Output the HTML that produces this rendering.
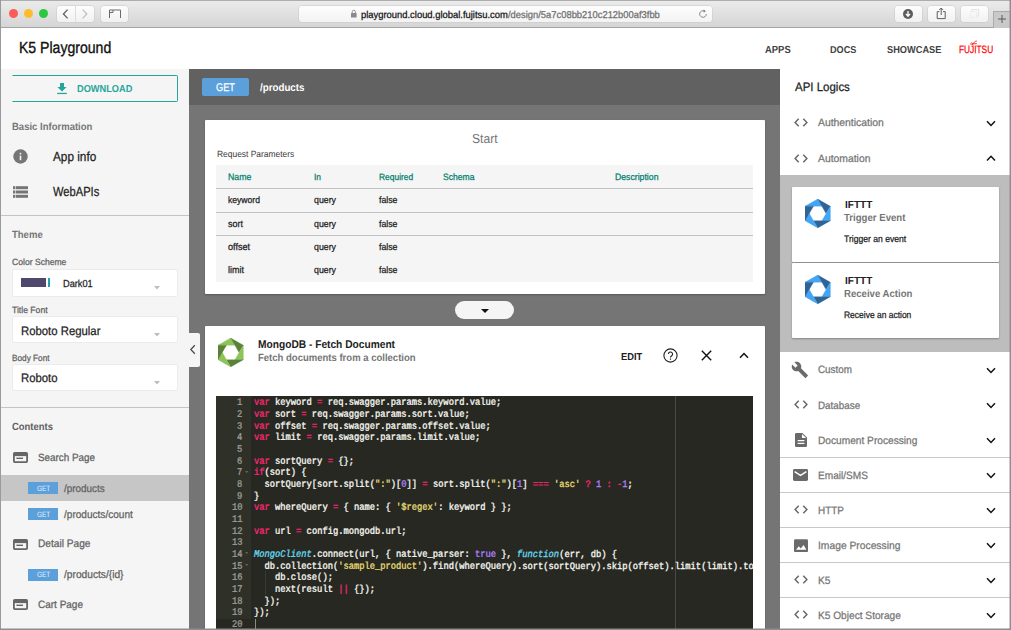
<!DOCTYPE html>
<html><head><meta charset="utf-8"><title>K5 Playground</title>
<style>
html,body{margin:0;padding:0;}
body{width:1011px;height:630px;overflow:hidden;position:relative;background:#fff;font-family:"Liberation Sans",sans-serif;}
.b{position:absolute;display:block;box-sizing:border-box;}
.t{position:absolute;display:block;white-space:nowrap;line-height:1;transform-origin:0 0;-webkit-text-stroke:0.25px;}
.c{position:absolute;display:block;white-space:pre;line-height:1;transform-origin:0 0;-webkit-text-stroke:0.3px;font-family:"Liberation Mono",monospace;}
.k{color:#f92672}.s{color:#e6db74}.n{color:#ae81ff}.f{color:#66d9ef;font-style:italic}
</style></head><body>
<div class="b" style="left:0px;top:0px;width:1011px;height:28px;background:linear-gradient(#ebebeb,#d5d5d5);border-top:1px solid #adadad;border-bottom:1px solid #a3a3a3;"></div>
<div class="b" style="left:0px;top:28px;width:1011px;height:41px;background:#fff;"></div>
<div class="b" style="left:0px;top:69px;width:189px;height:561px;background:#f5f5f5;"></div>
<div class="b" style="left:189px;top:69px;width:591px;height:561px;background:#757575;"></div>
<div class="b" style="left:189px;top:69px;width:591px;height:36px;background:#616161;"></div>
<div class="b" style="left:780px;top:69px;width:231px;height:561px;background:#fff;"></div>
<div class="b" style="left:8.8px;top:9.1px;width:9.4px;height:9.4px;background:#fc5b57;border-radius:50%;"></div>
<div class="b" style="left:23.7px;top:9.1px;width:9.4px;height:9.4px;background:#fdbc2e;border-radius:50%;"></div>
<div class="b" style="left:38.5px;top:9.1px;width:9.4px;height:9.4px;background:#28c83f;border-radius:50%;"></div>
<div class="b" style="left:57px;top:6px;width:37px;height:16px;background:linear-gradient(#fdfdfd,#f1f1f1);border-radius:3px;box-shadow:0 0 0 0.5px #c9c9c9;"></div>
<div class="b" style="left:75.3px;top:6px;width:1px;height:16px;background:#dcdcdc;"></div>
<svg class="b" style="left:57px;top:6px;" width="37" height="16" viewBox="0 0 37 16"><path d="M10.6 3.6 L6.4 8 L10.6 12.4" fill="none" stroke="#5a5a5a" stroke-width="1.2"/><path d="M25.6 3.6 L29.8 8 L25.6 12.4" fill="none" stroke="#bcbcbc" stroke-width="1.2"/></svg>
<div class="b" style="left:101px;top:6px;width:27px;height:16px;background:linear-gradient(#fdfdfd,#f1f1f1);border-radius:3px;box-shadow:0 0 0 0.5px #c9c9c9;"></div>
<svg class="b" style="left:101px;top:6px;" width="27" height="16" viewBox="0 0 27 16"><path d="M8.5 12 V4 H19.5 V12 M8.5 6.5 H12 V4" fill="none" stroke="#6a6a6a" stroke-width="1"/></svg>
<div class="b" style="left:298.5px;top:6px;width:413px;height:16px;background:linear-gradient(#fdfdfd,#f3f3f3);border-radius:3px;box-shadow:0 0 0 0.5px #c9c9c9;"></div>
<svg class="b" style="left:350px;top:9px;" width="8" height="10" viewBox="0 0 8 10"><rect x="1" y="4" width="5.6" height="4.6" rx="0.6" fill="#8a8a8a"/><path d="M2.2 4.2 V2.8 a1.6 1.6 0 0 1 3.2 0 V4.2" fill="none" stroke="#8a8a8a" stroke-width="0.9"/></svg>
<span class="t" style="left:360.70px;top:10.010px;font-size:9.90px;color:#111;transform:scale(0.9518,1) rotate(0.03deg);">playground.cloud.global.fujitsu.com</span>
<span class="t" style="left:507.90px;top:10.010px;font-size:9.90px;color:#6e6e6e;transform:scale(0.9501,1) rotate(0.03deg);">/design/5a7c08bb210c212b00af3fbb</span>
<svg class="b" style="left:698px;top:9px;" width="10" height="10" viewBox="0 0 10 10"><path d="M8.3 5 A3.3 3.3 0 1 1 6.6 2.1" fill="none" stroke="#7a7a7a" stroke-width="0.9"/><path d="M5.6 0.6 L7.8 2.2 L5.6 3.8 Z" fill="#7a7a7a"/></svg>
<div class="b" style="left:895px;top:6px;width:26.5px;height:16px;background:linear-gradient(#fdfdfd,#f1f1f1);border-radius:3px;box-shadow:0 0 0 0.5px #c9c9c9;"></div>
<div class="b" style="left:928px;top:6px;width:26.5px;height:16px;background:linear-gradient(#fdfdfd,#f1f1f1);border-radius:3px;box-shadow:0 0 0 0.5px #c9c9c9;"></div>
<div class="b" style="left:961px;top:6px;width:26.5px;height:16px;background:linear-gradient(#fdfdfd,#f1f1f1);border-radius:3px;box-shadow:0 0 0 0.5px #c9c9c9;"></div>
<svg class="b" style="left:903px;top:8.7px;" width="10" height="10" viewBox="0 0 10 10"><circle cx="5" cy="5" r="5" fill="#5c5c5c"/><path d="M5 2 V6.4 M2.9 4.9 L5 7.2 L7.1 4.9" stroke="#fff" stroke-width="1.3" fill="none"/></svg>
<svg class="b" style="left:936px;top:7px;" width="11" height="13" viewBox="0 0 11 13"><path d="M3.4 4.6 H1.2 V11.6 H9.2 V4.6 H7" fill="none" stroke="#5f5f5f" stroke-width="1"/><path d="M5.2 8 V1.2 M3.2 3 L5.2 1 L7.2 3" fill="none" stroke="#5f5f5f" stroke-width="1"/></svg>
<svg class="b" style="left:969px;top:8px;" width="11" height="11" viewBox="0 0 11 11"><path d="M3 3.5 V1.5 H9.5 V8 H8" fill="none" stroke="#e3e3e3" stroke-width="1"/><rect x="1.5" y="3.5" width="6" height="6" fill="none" stroke="#ededed" stroke-width="1"/></svg>
<div class="b" style="left:993px;top:10.5px;width:17px;height:17px;background:#c9c9c9;border-left:1px solid #ababab;border-top:1px solid #ababab;"></div>
<svg class="b" style="left:997px;top:14px;" width="10" height="10" viewBox="0 0 10 10"><path d="M5 1 V9 M1 5 H9" stroke="#5a5a5a" stroke-width="1"/></svg>
<span class="t" style="left:18.80px;top:39.012px;font-size:16.10px;color:#111;transform:scale(0.8739,1) rotate(0.03deg);-webkit-text-stroke:0.35px #111;">K5 Playground</span>
<span class="t" style="left:765.20px;top:45.011px;font-size:10.29px;color:#424242;font-weight:bold;-webkit-text-stroke:0;transform:scale(0.9174,1) rotate(0.03deg);">APPS</span>
<span class="t" style="left:829.50px;top:45.007px;font-size:9.92px;color:#424242;font-weight:bold;-webkit-text-stroke:0;transform:scale(0.9174,1) rotate(0.03deg);">DOCS</span>
<span class="t" style="left:886.60px;top:45.008px;font-size:10.07px;color:#424242;font-weight:bold;-webkit-text-stroke:0;transform:scale(0.9174,1) rotate(0.03deg);">SHOWCASE</span>
<span class="t" style="left:959.20px;top:44.011px;font-size:10.60px;color:#ff0000;transform:scale(0.7848,1) rotate(0.03deg);">FUJITSU</span>
<svg class="b" style="left:969.8px;top:39.6px;" width="7.4" height="5.6" viewBox="0 0 7.4 5.6"><path d="M3.2 3.9 L1.8 5 L0.5 3.9 L1.8 2.8 L3.2 3.9 C4 2.6 4.6 1 6.9 1 M3.2 3.9 C4.2 3.6 5.4 3.7 6.9 3.7" fill="none" stroke="#ff0000" stroke-width="0.8"/></svg>
<div class="b" style="left:12px;top:75px;width:166px;height:27px;background:transparent;border:1px solid #26a69a;border-left-color:transparent;border-radius:0 2px 2px 0;"></div>
<svg class="b" style="left:56.4px;top:82px;" width="12" height="13" viewBox="0 0 12 13"><path d="M4 1 H8 V5 H10.6 L6 9.6 L1.4 5 H4 Z" fill="#26a69a"/><rect x="1.2" y="10.8" width="9.6" height="1.3" fill="#26a69a"/></svg>
<span class="t" style="left:77.00px;top:84.010px;font-size:10.07px;color:#26a69a;font-weight:bold;-webkit-text-stroke:0;transform:scale(0.9174,1) rotate(0.03deg);">DOWNLOAD</span>
<span class="t" style="left:12.00px;top:122.003px;font-size:10.39px;color:#757575;font-weight:bold;-webkit-text-stroke:0;transform:scale(0.9174,1) rotate(0.03deg);">Basic Information</span>
<svg class="b" style="left:13px;top:149.3px;" width="15" height="15" viewBox="0 0 15 15"><circle cx="7.5" cy="7.5" r="7.2" fill="#757575"/><rect x="6.7" y="6.6" width="1.6" height="4.6" fill="#f5f5f5"/><rect x="6.7" y="3.8" width="1.6" height="1.6" fill="#f5f5f5"/></svg>
<span class="t" style="left:52.80px;top:150.014px;font-size:13.20px;color:#212121;transform:scale(0.8939,1) rotate(0.03deg);">App info</span>
<svg class="b" style="left:13px;top:186px;" width="15" height="12" viewBox="0 0 15 12"><g fill="#757575"><rect x="0" y="0.2" width="2.4" height="3"/><rect x="3.0" y="0.2" width="12" height="3"/><rect x="0" y="4.5" width="2.4" height="3"/><rect x="3.0" y="4.5" width="12" height="3"/><rect x="0" y="8.8" width="2.4" height="3"/><rect x="3.0" y="8.8" width="12" height="3"/></g></svg>
<span class="t" style="left:53.00px;top:185.014px;font-size:13.20px;color:#212121;transform:scale(0.8452,1) rotate(0.03deg);">WebAPIs</span>
<div class="b" style="left:0px;top:214.5px;width:189px;height:1px;background:#c4c4c4;"></div>
<span class="t" style="left:12.00px;top:230.009px;font-size:10.38px;color:#757575;font-weight:bold;-webkit-text-stroke:0;transform:scale(0.9174,1) rotate(0.03deg);">Theme</span>
<span class="t" style="left:12.00px;top:258.007px;font-size:9.00px;color:#616161;transform:scale(0.9540,1) rotate(0.03deg);">Color Scheme</span>
<div class="b" style="left:12px;top:269px;width:166px;height:28px;background:#fff;border:1px solid #ebebeb;border-radius:2px;"></div>
<div class="b" style="left:12px;top:316px;width:166px;height:27px;background:#fff;border:1px solid #ebebeb;border-radius:2px;"></div>
<div class="b" style="left:12px;top:364px;width:166px;height:27px;background:#fff;border:1px solid #ebebeb;border-radius:2px;"></div>
<div class="b" style="left:21px;top:278px;width:25px;height:9px;background:#50486c;"></div>
<div class="b" style="left:48px;top:278px;width:2px;height:9px;background:#22a1b5;"></div>
<span class="t" style="left:62.90px;top:279.006px;font-size:10.20px;color:#212121;transform:scale(0.9063,1) rotate(0.03deg);">Dark01</span>
<svg class="b" style="left:153.8px;top:285.7px;" width="6" height="4" viewBox="0 0 6 4"><path d="M0 0 H6 L3 3.4 Z" fill="#bdbdbd"/></svg>
<svg class="b" style="left:153.8px;top:333px;" width="6" height="4" viewBox="0 0 6 4"><path d="M0 0 H6 L3 3.4 Z" fill="#bdbdbd"/></svg>
<svg class="b" style="left:153.8px;top:381px;" width="6" height="4" viewBox="0 0 6 4"><path d="M0 0 H6 L3 3.4 Z" fill="#bdbdbd"/></svg>
<span class="t" style="left:12.00px;top:306.007px;font-size:9.00px;color:#616161;transform:scale(0.9575,1) rotate(0.03deg);">Title Font</span>
<span class="t" style="left:21.40px;top:325.001px;font-size:12.20px;color:#212121;transform:scale(0.9303,1) rotate(0.03deg);">Roboto Regular</span>
<span class="t" style="left:12.00px;top:354.007px;font-size:9.00px;color:#616161;transform:scale(0.9141,1) rotate(0.03deg);">Body Font</span>
<span class="t" style="left:21.40px;top:372.001px;font-size:12.20px;color:#212121;transform:scale(0.9303,1) rotate(0.03deg);">Roboto</span>
<div class="b" style="left:0px;top:407px;width:189px;height:1px;background:#c4c4c4;"></div>
<span class="t" style="left:12.00px;top:422.004px;font-size:10.31px;color:#616161;font-weight:bold;-webkit-text-stroke:0;transform:scale(0.9174,1) rotate(0.03deg);">Contents</span>
<div class="b" style="left:0px;top:475px;width:189px;height:26px;background:#c6c6c6;"></div>
<svg class="b" style="left:13px;top:452px;" width="15" height="11" viewBox="0 0 15 11"><rect x="0.9" y="0.9" width="13.2" height="9.2" rx="0.8" fill="none" stroke="#666" stroke-width="1.8"/><rect x="0.9" y="0.9" width="13.2" height="3.2" fill="#666"/><rect x="3.4" y="5.6" width="6.6" height="1.4" fill="#666"/></svg>
<span class="t" style="left:38.00px;top:452.008px;font-size:10.55px;color:#616161;transform:scale(0.9346,1) rotate(0.03deg);">Search Page</span>
<div class="b" style="left:28px;top:482px;width:30px;height:12px;background:#5b9fdb;"></div>
<span class="t" style="left:36.60px;top:485.004px;font-size:7.60px;color:rgba(255,255,255,.88);transform:scale(0.8513,1) rotate(0.03deg);-webkit-text-stroke:0;">GET</span>
<span class="t" style="left:64.30px;top:483.000px;font-size:10.61px;color:#616161;transform:scale(0.9346,1) rotate(0.03deg);">/products</span>
<div class="b" style="left:28px;top:508px;width:30px;height:12px;background:#5b9fdb;"></div>
<span class="t" style="left:36.60px;top:511.004px;font-size:7.60px;color:rgba(255,255,255,.88);transform:scale(0.8513,1) rotate(0.03deg);-webkit-text-stroke:0;">GET</span>
<span class="t" style="left:64.30px;top:509.011px;font-size:10.77px;color:#616161;transform:scale(0.9346,1) rotate(0.03deg);">/products/count</span>
<svg class="b" style="left:13px;top:538.5px;" width="15" height="11" viewBox="0 0 15 11"><rect x="0.9" y="0.9" width="13.2" height="9.2" rx="0.8" fill="none" stroke="#666" stroke-width="1.8"/><rect x="0.9" y="0.9" width="13.2" height="3.2" fill="#666"/><rect x="3.4" y="5.6" width="6.6" height="1.4" fill="#666"/></svg>
<span class="t" style="left:38.00px;top:538.006px;font-size:10.87px;color:#616161;transform:scale(0.9346,1) rotate(0.03deg);">Detail Page</span>
<div class="b" style="left:28px;top:568.5px;width:30px;height:12px;background:#5b9fdb;"></div>
<span class="t" style="left:36.60px;top:571.004px;font-size:7.60px;color:rgba(255,255,255,.88);transform:scale(0.8513,1) rotate(0.03deg);-webkit-text-stroke:0;">GET</span>
<span class="t" style="left:64.30px;top:569.002px;font-size:10.91px;color:#616161;transform:scale(0.9346,1) rotate(0.03deg);">/products/{id}</span>
<svg class="b" style="left:13px;top:599px;" width="15" height="11" viewBox="0 0 15 11"><rect x="0.9" y="0.9" width="13.2" height="9.2" rx="0.8" fill="none" stroke="#666" stroke-width="1.8"/><rect x="0.9" y="0.9" width="13.2" height="3.2" fill="#666"/><rect x="3.4" y="5.6" width="6.6" height="1.4" fill="#666"/></svg>
<span class="t" style="left:38.00px;top:599.010px;font-size:10.69px;color:#616161;transform:scale(0.9346,1) rotate(0.03deg);">Cart Page</span>
<div class="b" style="left:189px;top:332.5px;width:11px;height:34px;background:#f5f5f5;border-radius:0 2px 2px 0;"></div>
<svg class="b" style="left:189.2px;top:344px;" width="8" height="11" viewBox="0 0 8 11"><path d="M5.8 1.2 L1.8 5.5 L5.8 9.8" fill="none" stroke="#4a4a4a" stroke-width="1.25"/></svg>
<div class="b" style="left:202px;top:78px;width:47px;height:18px;background:#5b9fdb;border-radius:2px;"></div>
<span class="t" style="left:215.60px;top:82.004px;font-size:11.20px;color:#fff;transform:scale(0.8252,1) rotate(0.03deg);">GET</span>
<span class="t" style="left:259.80px;top:82.003px;font-size:10.65px;color:#fff;font-weight:bold;-webkit-text-stroke:0;transform:scale(0.9174,1) rotate(0.03deg);">/products</span>
<div class="b" style="left:205px;top:120px;width:560px;height:174px;background:#fff;border-radius:1px;box-shadow:0 1px 2px rgba(0,0,0,.25);"></div>
<span class="t" style="left:471.60px;top:133.005px;font-size:12.97px;color:#757575;transform:scale(0.9346,1) rotate(0.03deg);-webkit-text-stroke:0;">Start</span>
<span class="t" style="left:216.70px;top:150.012px;font-size:9.03px;color:#3a3a3a;transform:scale(0.9346,1) rotate(0.03deg);-webkit-text-stroke:0;">Request Parameters</span>
<div class="b" style="left:216px;top:164.5px;width:537px;height:117px;background:#f5f5f5;"></div>
<span class="t" style="left:228.30px;top:173.011px;font-size:9.35px;color:#00806f;transform:scale(0.9346,1) rotate(0.03deg);">Name</span>
<span class="t" style="left:313.80px;top:173.007px;font-size:8.98px;color:#00806f;transform:scale(0.9346,1) rotate(0.03deg);">In</span>
<span class="t" style="left:378.50px;top:173.008px;font-size:9.02px;color:#00806f;transform:scale(0.9346,1) rotate(0.03deg);">Required</span>
<span class="t" style="left:442.60px;top:173.004px;font-size:9.19px;color:#00806f;transform:scale(0.9346,1) rotate(0.03deg);">Schema</span>
<span class="t" style="left:614.70px;top:173.014px;font-size:9.31px;color:#00806f;transform:scale(0.9346,1) rotate(0.03deg);">Description</span>
<div class="b" style="left:216px;top:188px;width:537px;height:1px;background:#c2c2c2;"></div>
<div class="b" style="left:216px;top:212px;width:537px;height:1px;background:#c2c2c2;"></div>
<div class="b" style="left:216px;top:235px;width:537px;height:1px;background:#c2c2c2;"></div>
<span class="t" style="left:228.30px;top:196.013px;font-size:9.20px;color:#212121;transform:scale(0.9346,1) rotate(0.03deg);">keyword</span>
<span class="t" style="left:313.80px;top:195.003px;font-size:9.41px;color:#212121;transform:scale(0.9346,1) rotate(0.03deg);">query</span>
<span class="t" style="left:378.50px;top:196.005px;font-size:9.37px;color:#212121;transform:scale(0.9346,1) rotate(0.03deg);">false</span>
<span class="t" style="left:228.30px;top:219.006px;font-size:9.63px;color:#212121;transform:scale(0.9346,1) rotate(0.03deg);">sort</span>
<span class="t" style="left:313.80px;top:219.003px;font-size:9.41px;color:#212121;transform:scale(0.9346,1) rotate(0.03deg);">query</span>
<span class="t" style="left:378.50px;top:220.005px;font-size:9.37px;color:#212121;transform:scale(0.9346,1) rotate(0.03deg);">false</span>
<span class="t" style="left:228.30px;top:242.011px;font-size:9.70px;color:#212121;transform:scale(0.9346,1) rotate(0.03deg);">offset</span>
<span class="t" style="left:313.80px;top:242.003px;font-size:9.41px;color:#212121;transform:scale(0.9346,1) rotate(0.03deg);">query</span>
<span class="t" style="left:378.50px;top:243.005px;font-size:9.37px;color:#212121;transform:scale(0.9346,1) rotate(0.03deg);">false</span>
<span class="t" style="left:228.30px;top:265.003px;font-size:9.63px;color:#212121;transform:scale(0.9346,1) rotate(0.03deg);">limit</span>
<span class="t" style="left:313.80px;top:265.003px;font-size:9.41px;color:#212121;transform:scale(0.9346,1) rotate(0.03deg);">query</span>
<span class="t" style="left:378.50px;top:266.005px;font-size:9.37px;color:#212121;transform:scale(0.9346,1) rotate(0.03deg);">false</span>
<div class="b" style="left:455px;top:301px;width:59px;height:18px;background:#f5f5f5;border-radius:9px;"></div>
<svg class="b" style="left:480.5px;top:308.6px;" width="8" height="4" viewBox="0 0 8 4"><path d="M0 0 H8 L4 4 Z" fill="#111"/></svg>
<div class="b" style="left:205px;top:326px;width:560px;height:320px;background:#fff;border-radius:1px;box-shadow:0 1px 2px rgba(0,0,0,.25);"></div>
<svg class="b" style="left:218.2px;top:337.9px;" width="25.4" height="28.9" viewBox="0 0 25.4 28.9"><polygon points="0.00,7.22 12.70,0.00 16.87,7.22" fill="#8dc55a" stroke="#8dc55a" stroke-width="0.3"/><polygon points="12.70,0.00 25.40,7.22 21.04,14.45" fill="#5b8238" stroke="#5b8238" stroke-width="0.3"/><polygon points="25.40,7.22 25.40,21.67 16.87,21.67" fill="#8dc55a" stroke="#8dc55a" stroke-width="0.3"/><polygon points="25.40,21.67 12.70,28.90 8.53,21.67" fill="#5b8238" stroke="#5b8238" stroke-width="0.3"/><polygon points="12.70,28.90 0.00,21.67 4.36,14.45" fill="#8dc55a" stroke="#8dc55a" stroke-width="0.3"/><polygon points="0.00,21.67 0.00,7.22 8.53,7.22" fill="#5b8238" stroke="#5b8238" stroke-width="0.3"/></svg>
<span class="t" style="left:257.90px;top:339.004px;font-size:11.11px;color:#212121;font-weight:bold;-webkit-text-stroke:0;transform:scale(0.9174,1) rotate(0.03deg);">MongoDB - Fetch Document</span>
<span class="t" style="left:258.00px;top:353.014px;font-size:10.39px;color:#757575;font-weight:bold;-webkit-text-stroke:0;transform:scale(0.9174,1) rotate(0.03deg);">Fetch documents from a collection</span>
<span class="t" style="left:620.50px;top:352.006px;font-size:10.14px;color:#212121;font-weight:bold;-webkit-text-stroke:0;transform:scale(0.9174,1) rotate(0.03deg);">EDIT</span>
<svg class="b" style="left:663.2px;top:348.1px;" width="15" height="15" viewBox="0 0 15 15"><circle cx="7.5" cy="7.5" r="6.6" fill="none" stroke="#212121" stroke-width="1.1"/><path d="M5.4 6.1 a2.1 2.1 0 1 1 3.3 1.7 c-0.8 0.6 -1.2 0.9 -1.2 1.8" fill="none" stroke="#212121" stroke-width="1.1"/><rect x="6.9" y="10.5" width="1.2" height="1.2" fill="#212121"/></svg>
<svg class="b" style="left:700.6px;top:350.3px;" width="11" height="11" viewBox="0 0 11 11"><path d="M0.8 0.8 L10.2 10.2 M10.2 0.8 L0.8 10.2" stroke="#111" stroke-width="1.4"/></svg>
<svg class="b" style="left:739.3px;top:352px;" width="10" height="7" viewBox="0 0 10 7"><path d="M1 5.7 L5 1.6 L9 5.7" fill="none" stroke="#111" stroke-width="1.5"/></svg>
<div class="b" style="left:216px;top:396px;width:537px;height:234px;background:#272822;"></div>
<div class="b" style="left:216px;top:396px;width:35px;height:234px;background:#2f3129;"></div>
<div class="b" style="left:675.3px;top:396px;width:1px;height:234px;background:#4a4b45;"></div>
<div class="b" style="left:216px;top:619px;width:35px;height:11px;background:#272822;"></div>
<div class="b" style="left:254.5px;top:619px;width:1px;height:10px;background:#8a8a86;"></div>
<span class="c" style="left:236.93px;top:398.289px;font-size:8.78px;color:#9a9b95;transform:scale(1.0000,1.12) rotate(0.03deg);">1</span>
<span class="c" style="left:254.20px;top:398.289px;font-size:8.78px;color:#f8f8f2;transform:scale(1.0000,1.12) rotate(0.03deg);"><span class="k">var</span> keyword <span class="k">=</span> req.swagger.params.keyword.value;</span>
<span class="c" style="left:236.93px;top:409.958px;font-size:8.78px;color:#9a9b95;transform:scale(1.0000,1.12) rotate(0.03deg);">2</span>
<span class="c" style="left:254.20px;top:409.958px;font-size:8.78px;color:#f8f8f2;transform:scale(1.0000,1.12) rotate(0.03deg);"><span class="k">var</span> sort <span class="k">=</span> req.swagger.params.sort.value;</span>
<span class="c" style="left:236.93px;top:421.626px;font-size:8.78px;color:#9a9b95;transform:scale(1.0000,1.12) rotate(0.03deg);">3</span>
<span class="c" style="left:254.20px;top:421.626px;font-size:8.78px;color:#f8f8f2;transform:scale(1.0000,1.12) rotate(0.03deg);"><span class="k">var</span> offset <span class="k">=</span> req.swagger.params.offset.value;</span>
<span class="c" style="left:236.93px;top:433.294px;font-size:8.78px;color:#9a9b95;transform:scale(1.0000,1.12) rotate(0.03deg);">4</span>
<span class="c" style="left:254.20px;top:433.294px;font-size:8.78px;color:#f8f8f2;transform:scale(1.0000,1.12) rotate(0.03deg);"><span class="k">var</span> limit <span class="k">=</span> req.swagger.params.limit.value;</span>
<span class="c" style="left:236.93px;top:444.962px;font-size:8.78px;color:#9a9b95;transform:scale(1.0000,1.12) rotate(0.03deg);">5</span>
<span class="c" style="left:236.93px;top:456.630px;font-size:8.78px;color:#9a9b95;transform:scale(1.0000,1.12) rotate(0.03deg);">6</span>
<span class="c" style="left:254.20px;top:456.630px;font-size:8.78px;color:#f8f8f2;transform:scale(1.0000,1.12) rotate(0.03deg);"><span class="k">var</span> sortQuery <span class="k">=</span> {};</span>
<span class="c" style="left:236.93px;top:468.314px;font-size:8.78px;color:#9a9b95;transform:scale(1.0000,1.12) rotate(0.03deg);">7</span>
<span class="c" style="left:254.20px;top:468.314px;font-size:8.78px;color:#f8f8f2;transform:scale(1.0000,1.12) rotate(0.03deg);"><span class="k">if</span>(sort) {</span>
<svg class="b" style="left:245px;top:470.62px;" width="3.4" height="2.6" viewBox="0 0 4 3"><path d="M0 0 H4 L2 2.6 Z" fill="#5d5e58"/></svg>
<span class="c" style="left:236.93px;top:479.982px;font-size:8.78px;color:#9a9b95;transform:scale(1.0000,1.12) rotate(0.03deg);">8</span>
<span class="c" style="left:254.20px;top:479.982px;font-size:8.78px;color:#f8f8f2;transform:scale(1.0000,1.12) rotate(0.03deg);">  sortQuery[sort.split(<span class="s">":"</span>)[<span class="n">0</span>]] <span class="k">=</span> sort.split(<span class="s">":"</span>)[<span class="n">1</span>] <span class="k">===</span> <span class="s">'asc'</span> <span class="k">?</span> <span class="n">1</span> <span class="k">:</span> <span class="k">-</span><span class="n">1</span>;</span>
<span class="c" style="left:236.93px;top:491.650px;font-size:8.78px;color:#9a9b95;transform:scale(1.0000,1.12) rotate(0.03deg);">9</span>
<span class="c" style="left:254.20px;top:491.650px;font-size:8.78px;color:#f8f8f2;transform:scale(1.0000,1.12) rotate(0.03deg);">}</span>
<span class="c" style="left:231.66px;top:503.318px;font-size:8.78px;color:#9a9b95;transform:scale(1.0000,1.12) rotate(0.03deg);">10</span>
<span class="c" style="left:254.20px;top:503.318px;font-size:8.78px;color:#f8f8f2;transform:scale(1.0000,1.12) rotate(0.03deg);"><span class="k">var</span> whereQuery <span class="k">=</span> { name: { <span class="s">'$regex'</span>: keyword } };</span>
<span class="c" style="left:231.66px;top:514.986px;font-size:8.78px;color:#9a9b95;transform:scale(1.0000,1.12) rotate(0.03deg);">11</span>
<span class="c" style="left:231.66px;top:526.654px;font-size:8.78px;color:#9a9b95;transform:scale(1.0000,1.12) rotate(0.03deg);">12</span>
<span class="c" style="left:254.20px;top:526.654px;font-size:8.78px;color:#f8f8f2;transform:scale(1.0000,1.12) rotate(0.03deg);"><span class="k">var</span> url <span class="k">=</span> config.mongodb.url;</span>
<span class="c" style="left:231.66px;top:538.323px;font-size:8.78px;color:#9a9b95;transform:scale(1.0000,1.12) rotate(0.03deg);">13</span>
<span class="c" style="left:231.66px;top:549.991px;font-size:8.78px;color:#9a9b95;transform:scale(1.0000,1.12) rotate(0.03deg);">14</span>
<span class="c" style="left:254.20px;top:549.991px;font-size:8.78px;color:#f8f8f2;transform:scale(1.0000,1.12) rotate(0.03deg);"><span class="f">MongoClient</span>.connect(url, { native_parser: <span class="n">true</span> }, <span class="f">function</span>(err, db) {</span>
<svg class="b" style="left:245px;top:552.3100000000001px;" width="3.4" height="2.6" viewBox="0 0 4 3"><path d="M0 0 H4 L2 2.6 Z" fill="#5d5e58"/></svg>
<span class="c" style="left:231.66px;top:561.674px;font-size:8.78px;color:#9a9b95;transform:scale(1.0000,1.12) rotate(0.03deg);">15</span>
<span class="c" style="left:254.20px;top:561.674px;font-size:8.78px;color:#f8f8f2;transform:scale(1.0000,1.12) rotate(0.03deg);">  db.collection(<span class="s">'sample_product'</span>).find(whereQuery).sort(sortQuery).skip(offset).limit(limit).to</span>
<svg class="b" style="left:245px;top:563.98px;" width="3.4" height="2.6" viewBox="0 0 4 3"><path d="M0 0 H4 L2 2.6 Z" fill="#5d5e58"/></svg>
<span class="c" style="left:231.66px;top:573.343px;font-size:8.78px;color:#9a9b95;transform:scale(1.0000,1.12) rotate(0.03deg);">16</span>
<span class="c" style="left:254.20px;top:573.343px;font-size:8.78px;color:#f8f8f2;transform:scale(1.0000,1.12) rotate(0.03deg);">    db.close();</span>
<span class="c" style="left:231.66px;top:585.011px;font-size:8.78px;color:#9a9b95;transform:scale(1.0000,1.12) rotate(0.03deg);">17</span>
<span class="c" style="left:254.20px;top:585.011px;font-size:8.78px;color:#f8f8f2;transform:scale(1.0000,1.12) rotate(0.03deg);">    next(result <span class="k">||</span> {});</span>
<span class="c" style="left:231.66px;top:596.679px;font-size:8.78px;color:#9a9b95;transform:scale(1.0000,1.12) rotate(0.03deg);">18</span>
<span class="c" style="left:254.20px;top:596.679px;font-size:8.78px;color:#f8f8f2;transform:scale(1.0000,1.12) rotate(0.03deg);">  });</span>
<span class="c" style="left:231.66px;top:608.347px;font-size:8.78px;color:#9a9b95;transform:scale(1.0000,1.12) rotate(0.03deg);">19</span>
<span class="c" style="left:254.20px;top:608.347px;font-size:8.78px;color:#f8f8f2;transform:scale(1.0000,1.12) rotate(0.03deg);">});</span>
<span class="c" style="left:231.66px;top:620.015px;font-size:8.78px;color:#9a9b95;transform:scale(1.0000,1.12) rotate(0.03deg);">20</span>
<div class="b" style="left:264.6px;top:571.38px;width:1px;height:23.34px;background:#3b3a32;"></div>
<div class="b" style="left:753px;top:396px;width:12px;height:234px;background:#fff;"></div>
<span class="t" style="left:794.80px;top:81.004px;font-size:12.29px;color:#212121;transform:scale(0.9346,1) rotate(0.03deg);">API Logics</span>
<svg class="b" style="left:793.6px;top:118.2px;" width="14" height="9" viewBox="0 0 14 9"><path d="M4.7 0.7 L1.1 4.5 L4.7 8.3 M9.3 0.7 L12.9 4.5 L9.3 8.3" fill="none" stroke="#666" stroke-width="1.45"/></svg>
<span class="t" style="left:818.00px;top:117.005px;font-size:10.70px;color:#757575;transform:scale(0.9703,1) rotate(0.03deg);">Authentication</span>
<svg class="b" style="left:985.7px;top:120.0px;" width="10" height="7" viewBox="0 0 10 7"><path d="M1 1.3 L5 5.4 L9 1.3" fill="none" stroke="#111" stroke-width="1.5"/></svg>
<svg class="b" style="left:793.6px;top:153.5px;" width="14" height="9" viewBox="0 0 14 9"><path d="M4.7 0.7 L1.1 4.5 L4.7 8.3 M9.3 0.7 L12.9 4.5 L9.3 8.3" fill="none" stroke="#666" stroke-width="1.45"/></svg>
<span class="t" style="left:818.00px;top:153.005px;font-size:10.70px;color:#757575;transform:scale(0.9699,1) rotate(0.03deg);">Automation</span>
<svg class="b" style="left:985.7px;top:155.0px;" width="10" height="7" viewBox="0 0 10 7"><path d="M1 5.4 L5 1.3 L9 5.4" fill="none" stroke="#111" stroke-width="1.5"/></svg>
<div class="b" style="left:780px;top:175px;width:231px;height:176.5px;background:#bdbdbd;"></div>
<div class="b" style="left:792px;top:186.5px;width:207px;height:75px;background:#fff;border-radius:1px;box-shadow:0 1px 2px rgba(0,0,0,.3);"></div>
<div class="b" style="left:792px;top:262.5px;width:207px;height:75px;background:#fff;border-radius:1px;box-shadow:0 1px 2px rgba(0,0,0,.3);"></div>
<svg class="b" style="left:805.2px;top:198.9px;" width="25.4" height="28.9" viewBox="0 0 25.4 28.9"><polygon points="0.00,7.22 12.70,0.00 16.87,7.22" fill="#42a5f5" stroke="#42a5f5" stroke-width="0.3"/><polygon points="12.70,0.00 25.40,7.22 21.04,14.45" fill="#2f6497" stroke="#2f6497" stroke-width="0.3"/><polygon points="25.40,7.22 25.40,21.67 16.87,21.67" fill="#42a5f5" stroke="#42a5f5" stroke-width="0.3"/><polygon points="25.40,21.67 12.70,28.90 8.53,21.67" fill="#2f6497" stroke="#2f6497" stroke-width="0.3"/><polygon points="12.70,28.90 0.00,21.67 4.36,14.45" fill="#42a5f5" stroke="#42a5f5" stroke-width="0.3"/><polygon points="0.00,21.67 0.00,7.22 8.53,7.22" fill="#2f6497" stroke="#2f6497" stroke-width="0.3"/></svg>
<svg class="b" style="left:805.2px;top:274.9px;" width="25.4" height="28.9" viewBox="0 0 25.4 28.9"><polygon points="0.00,7.22 12.70,0.00 16.87,7.22" fill="#42a5f5" stroke="#42a5f5" stroke-width="0.3"/><polygon points="12.70,0.00 25.40,7.22 21.04,14.45" fill="#2f6497" stroke="#2f6497" stroke-width="0.3"/><polygon points="25.40,7.22 25.40,21.67 16.87,21.67" fill="#42a5f5" stroke="#42a5f5" stroke-width="0.3"/><polygon points="25.40,21.67 12.70,28.90 8.53,21.67" fill="#2f6497" stroke="#2f6497" stroke-width="0.3"/><polygon points="12.70,28.90 0.00,21.67 4.36,14.45" fill="#42a5f5" stroke="#42a5f5" stroke-width="0.3"/><polygon points="0.00,21.67 0.00,7.22 8.53,7.22" fill="#2f6497" stroke="#2f6497" stroke-width="0.3"/></svg>
<span class="t" style="left:844.80px;top:200.015px;font-size:10.30px;color:#212121;font-weight:bold;-webkit-text-stroke:0;transform:scale(0.9740,1) rotate(0.03deg);">IFTTT</span>
<span class="t" style="left:844.40px;top:213.015px;font-size:10.30px;color:#757575;font-weight:bold;-webkit-text-stroke:0;transform:scale(0.9328,1) rotate(0.03deg);">Trigger Event</span>
<span class="t" style="left:844.40px;top:234.012px;font-size:9.40px;color:#212121;transform:scale(0.9148,1) rotate(0.03deg);">Trigger an event</span>
<span class="t" style="left:844.80px;top:276.015px;font-size:10.30px;color:#212121;font-weight:bold;-webkit-text-stroke:0;transform:scale(0.9740,1) rotate(0.03deg);">IFTTT</span>
<span class="t" style="left:844.40px;top:289.015px;font-size:10.30px;color:#757575;font-weight:bold;-webkit-text-stroke:0;transform:scale(0.9311,1) rotate(0.03deg);">Receive Action</span>
<span class="t" style="left:844.40px;top:310.012px;font-size:9.40px;color:#212121;transform:scale(0.9033,1) rotate(0.03deg);">Receive an action</span>
<span class="t" style="left:818.00px;top:364.005px;font-size:10.70px;color:#757575;transform:scale(0.9223,1) rotate(0.03deg);">Custom</span>
<svg class="b" style="left:985.7px;top:366.8px;" width="10" height="7" viewBox="0 0 10 7"><path d="M1 1.3 L5 5.4 L9 1.3" fill="none" stroke="#111" stroke-width="1.5"/></svg>
<svg class="b" style="left:791.1px;top:360.9px;" width="17.7" height="17.7" viewBox="0 0 24 24"><path d="M22.7 19l-9.1-9.1c.9-2.3.4-5-1.5-6.9-2-2-5-2.4-7.4-1.3L9 6 6 9 1.6 4.7C.4 7.100000000000001.9 10.1 2.9 12.1c1.9 1.9 4.6 2.4 6.9 1.5l9.1 9.1c.4.4 1 .4 1.400000000000001 0l2.3-2.3c.5-.4.5-1.100000000000001.1-1.4z" fill="#6b6b6b"/></svg>
<span class="t" style="left:818.00px;top:400.005px;font-size:10.70px;color:#757575;transform:scale(0.9213,1) rotate(0.03deg);">Database</span>
<svg class="b" style="left:985.7px;top:401.8px;" width="10" height="7" viewBox="0 0 10 7"><path d="M1 1.3 L5 5.4 L9 1.3" fill="none" stroke="#111" stroke-width="1.5"/></svg>
<svg class="b" style="left:793.6px;top:400.0px;" width="14" height="9" viewBox="0 0 14 9"><path d="M4.7 0.7 L1.1 4.5 L4.7 8.3 M9.3 0.7 L12.9 4.5 L9.3 8.3" fill="none" stroke="#666" stroke-width="1.45"/></svg>
<span class="t" style="left:818.00px;top:435.005px;font-size:10.70px;color:#757575;transform:scale(0.9506,1) rotate(0.03deg);">Document Processing</span>
<svg class="b" style="left:985.7px;top:436.8px;" width="10" height="7" viewBox="0 0 10 7"><path d="M1 1.3 L5 5.4 L9 1.3" fill="none" stroke="#111" stroke-width="1.5"/></svg>
<svg class="b" style="left:794.5px;top:432.5px;" width="12" height="14" viewBox="0 0 12 14"><path d="M1.2 0 H7.4 L12 4.6 V12.8 a1.2 1.2 0 0 1 -1.2 1.2 H1.2 a1.2 1.2 0 0 1 -1.2 -1.2 V1.2 A1.2 1.2 0 0 1 1.2 0 Z" fill="#6a6a6a"/><path d="M7 0.9 V5 H11.1 Z" fill="#fff"/><rect x="2.6" y="7" width="6.8" height="1.2" fill="#fff"/><rect x="2.6" y="9.8" width="6.8" height="1.2" fill="#fff"/></svg>
<div class="b" style="left:780px;top:456.5px;width:231px;height:1px;background:#c8c8c8;"></div>
<span class="t" style="left:818.00px;top:470.005px;font-size:10.70px;color:#757575;transform:scale(0.9449,1) rotate(0.03deg);">Email/SMS</span>
<svg class="b" style="left:985.7px;top:471.8px;" width="10" height="7" viewBox="0 0 10 7"><path d="M1 1.3 L5 5.4 L9 1.3" fill="none" stroke="#111" stroke-width="1.5"/></svg>
<svg class="b" style="left:793px;top:468.7px;" width="15" height="12" viewBox="0 0 15 12"><rect x="0" y="0" width="15" height="12" rx="1.4" fill="#6a6a6a"/><path d="M1.6 2.6 L7.5 6.4 L13.4 2.6" fill="none" stroke="#fff" stroke-width="1.4"/></svg>
<div class="b" style="left:780px;top:491.5px;width:231px;height:1px;background:#c8c8c8;"></div>
<span class="t" style="left:818.00px;top:505.005px;font-size:10.70px;color:#757575;transform:scale(0.9307,1) rotate(0.03deg);">HTTP</span>
<svg class="b" style="left:985.7px;top:506.8px;" width="10" height="7" viewBox="0 0 10 7"><path d="M1 1.3 L5 5.4 L9 1.3" fill="none" stroke="#111" stroke-width="1.5"/></svg>
<svg class="b" style="left:793.6px;top:505.0px;" width="14" height="9" viewBox="0 0 14 9"><path d="M4.7 0.7 L1.1 4.5 L4.7 8.3 M9.3 0.7 L12.9 4.5 L9.3 8.3" fill="none" stroke="#666" stroke-width="1.45"/></svg>
<div class="b" style="left:780px;top:526.5px;width:231px;height:1px;background:#c8c8c8;"></div>
<span class="t" style="left:818.00px;top:540.005px;font-size:10.70px;color:#757575;transform:scale(0.9633,1) rotate(0.03deg);">Image Processing</span>
<svg class="b" style="left:985.7px;top:541.8px;" width="10" height="7" viewBox="0 0 10 7"><path d="M1 1.3 L5 5.4 L9 1.3" fill="none" stroke="#111" stroke-width="1.5"/></svg>
<svg class="b" style="left:793.5px;top:538.5px;" width="14" height="13.4" viewBox="0 0 14 13"><rect x="0" y="0" width="14" height="13" rx="1.4" fill="#6a6a6a"/><path d="M2 10.6 L4.8 7 L6.8 9.4 L9.6 5.8 L12.4 10.6 Z" fill="#fff"/></svg>
<div class="b" style="left:780px;top:561.5px;width:231px;height:1px;background:#c8c8c8;"></div>
<span class="t" style="left:818.00px;top:575.005px;font-size:10.70px;color:#757575;transform:scale(0.9551,1) rotate(0.03deg);">K5</span>
<svg class="b" style="left:985.7px;top:576.8px;" width="10" height="7" viewBox="0 0 10 7"><path d="M1 1.3 L5 5.4 L9 1.3" fill="none" stroke="#111" stroke-width="1.5"/></svg>
<svg class="b" style="left:793.6px;top:575.0px;" width="14" height="9" viewBox="0 0 14 9"><path d="M4.7 0.7 L1.1 4.5 L4.7 8.3 M9.3 0.7 L12.9 4.5 L9.3 8.3" fill="none" stroke="#666" stroke-width="1.45"/></svg>
<div class="b" style="left:780px;top:596.5px;width:231px;height:1px;background:#c8c8c8;"></div>
<span class="t" style="left:818.00px;top:610.005px;font-size:10.70px;color:#757575;transform:scale(0.9493,1) rotate(0.03deg);">K5 Object Storage</span>
<svg class="b" style="left:985.7px;top:611.8px;" width="10" height="7" viewBox="0 0 10 7"><path d="M1 1.3 L5 5.4 L9 1.3" fill="none" stroke="#111" stroke-width="1.5"/></svg>
<svg class="b" style="left:793.6px;top:610.0px;" width="14" height="9" viewBox="0 0 14 9"><path d="M4.7 0.7 L1.1 4.5 L4.7 8.3 M9.3 0.7 L12.9 4.5 L9.3 8.3" fill="none" stroke="#666" stroke-width="1.45"/></svg>
<div class="b" style="left:0px;top:0px;width:1px;height:630px;background:#9a9a9a;"></div>
<div class="b" style="left:1009px;top:0px;width:1px;height:630px;background:rgba(142,142,142,.45);"></div>
<div class="b" style="left:1010px;top:0px;width:1px;height:630px;background:#8e8e8e;"></div>
<div class="b" style="left:0px;top:628px;width:1011px;height:1px;background:rgba(142,142,142,.5);"></div>
<div class="b" style="left:0px;top:629px;width:1011px;height:1px;background:#8e8e8e;"></div>
</body></html>
